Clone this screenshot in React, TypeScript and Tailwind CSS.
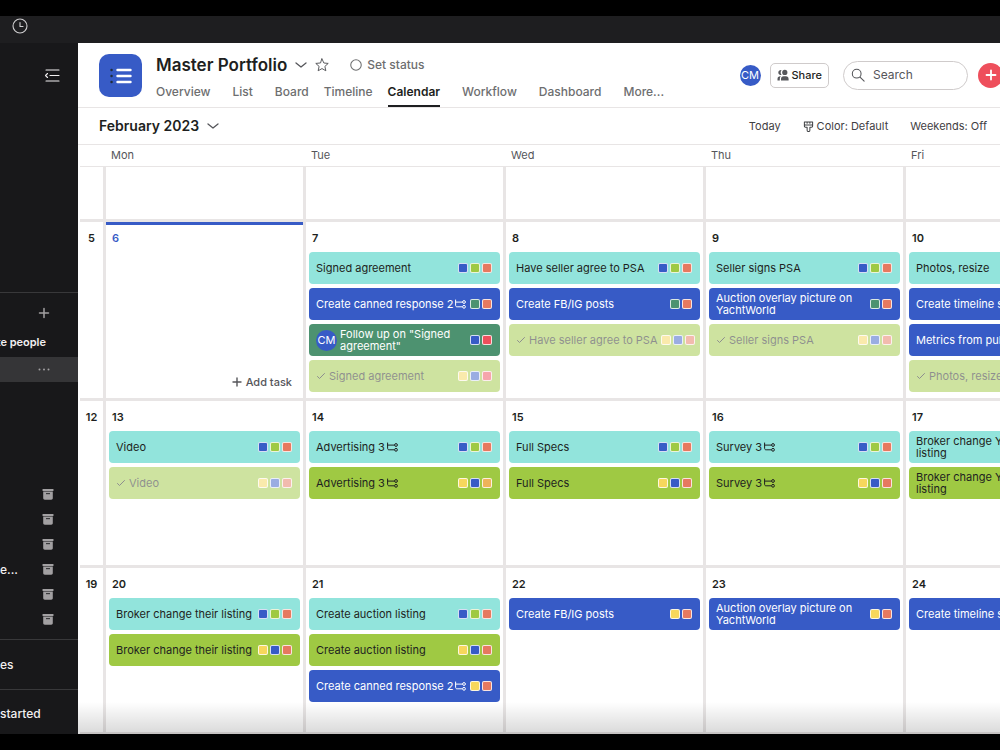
import type { ReactNode } from "react"
import clsx from "clsx"

type Tone = "teal" | "blue" | "forest" | "lime"
type Tag = "blue" | "lime" | "coral" | "red" | "yellow" | "orange" | "forest"

type Task = {
  title: string
  tone: Tone
  tags: Tag[]
  subtasks?: number
  done?: boolean
  assignee?: string
}

type Day = { date: string; today?: boolean; tasks: Task[] }
type Week = { number: string; days: Day[] }

const toneClass: Record<Tone, string> = {
  teal: "bg-[#92e4dc] text-[#1e1f21]",
  blue: "bg-[#375bc6] text-white",
  forest: "bg-[#4d9270] text-white",
  lime: "bg-[#9fc943] text-[#1e1f21]",
}

const tagClass: Record<Tag, string> = {
  blue: "bg-[#375bc6]",
  lime: "bg-[#9fc943]",
  coral: "bg-[#e6795f]",
  red: "bg-[#ee4f5c]",
  yellow: "bg-[#f7d75c]",
  orange: "bg-[#efb35a]",
  forest: "bg-[#4d9270]",
}

const open: Tag[] = ["blue", "lime", "coral"]
const closed: Tag[] = ["yellow", "blue", "coral"]

const weeks: Week[] = [
  {
    number: "5",
    days: [
      { date: "6", today: true, tasks: [] },
      {
        date: "7",
        tasks: [
          { title: "Signed agreement", tone: "teal", tags: open },
          { title: "Create canned response", tone: "blue", tags: ["forest", "coral"], subtasks: 2 },
          { title: 'Follow up on "Signed agreement"', tone: "forest", tags: ["blue", "red"], assignee: "CM" },
          { title: "Signed agreement", tone: "lime", tags: ["yellow", "blue", "red"], done: true },
        ],
      },
      {
        date: "8",
        tasks: [
          { title: "Have seller agree to PSA", tone: "teal", tags: open },
          { title: "Create FB/IG posts", tone: "blue", tags: ["forest", "coral"] },
          { title: "Have seller agree to PSA", tone: "lime", tags: closed, done: true },
        ],
      },
      {
        date: "9",
        tasks: [
          { title: "Seller signs PSA", tone: "teal", tags: open },
          { title: "Auction overlay picture on YachtWorld", tone: "blue", tags: ["forest", "coral"] },
          { title: "Seller signs PSA", tone: "lime", tags: closed, done: true },
        ],
      },
      {
        date: "10",
        tasks: [
          { title: "Photos, resize", tone: "teal", tags: open },
          { title: "Create timeline schedule", tone: "blue", tags: ["forest", "coral"] },
          { title: "Metrics from publisher", tone: "blue", tags: ["forest", "coral"] },
          { title: "Photos, resize", tone: "lime", tags: closed, done: true },
        ],
      },
    ],
  },
  {
    number: "12",
    days: [
      {
        date: "13",
        tasks: [
          { title: "Video", tone: "teal", tags: open },
          { title: "Video", tone: "lime", tags: closed, done: true },
        ],
      },
      {
        date: "14",
        tasks: [
          { title: "Advertising", tone: "teal", tags: open, subtasks: 3 },
          { title: "Advertising", tone: "lime", tags: ["yellow", "blue", "orange"], subtasks: 3 },
        ],
      },
      {
        date: "15",
        tasks: [
          { title: "Full Specs", tone: "teal", tags: open },
          { title: "Full Specs", tone: "lime", tags: closed },
        ],
      },
      {
        date: "16",
        tasks: [
          { title: "Survey", tone: "teal", tags: open, subtasks: 3 },
          { title: "Survey", tone: "lime", tags: closed, subtasks: 3 },
        ],
      },
      {
        date: "17",
        tasks: [
          { title: "Broker change Yacht listing", tone: "teal", tags: open },
          { title: "Broker change Yacht listing", tone: "lime", tags: closed },
        ],
      },
    ],
  },
  {
    number: "19",
    days: [
      {
        date: "20",
        tasks: [
          { title: "Broker change their listing", tone: "teal", tags: open },
          { title: "Broker change their listing", tone: "lime", tags: closed },
        ],
      },
      {
        date: "21",
        tasks: [
          { title: "Create auction listing", tone: "teal", tags: open },
          { title: "Create auction listing", tone: "lime", tags: closed },
          { title: "Create canned response", tone: "blue", tags: ["yellow", "coral"], subtasks: 2 },
        ],
      },
      { date: "22", tasks: [{ title: "Create FB/IG posts", tone: "blue", tags: ["yellow", "coral"] }] },
      {
        date: "23",
        tasks: [{ title: "Auction overlay picture on YachtWorld", tone: "blue", tags: ["yellow", "coral"] }],
      },
      { date: "24", tasks: [{ title: "Create timeline schedule", tone: "blue", tags: ["yellow", "coral"] }] },
    ],
  },
]

const weekdays = ["Mon", "Tue", "Wed", "Thu", "Fri"]
const tabGroups = [["Overview"], ["List"], ["Board", "Timeline", "Calendar"], ["Workflow"], ["Dashboard"], ["More..."]]

const gridCols = "grid grid-cols-[23px_repeat(5,minmax(200px,1fr))]"

function Icon({ size, box = 16, className, children }: { size: number; box?: number; className?: string; children: ReactNode }) {
  return (
    <svg
      width={size}
      height={size}
      viewBox={`0 0 ${box} ${box}`}
      fill="none"
      stroke="currentColor"
      strokeLinecap="round"
      strokeLinejoin="round"
      aria-hidden="true"
      className={clsx("shrink-0", className)}
    >
      {children}
    </svg>
  )
}

function ChevronDown() {
  return (
    <Icon size={12} box={12} className="text-[#55565a]">
      <path d="M1 4l5 4 5-4" strokeWidth="1.3" />
    </Icon>
  )
}

function SubtaskIcon() {
  return (
    <svg width="11" height="10" viewBox="0 0 11 10" fill="none" stroke="currentColor" aria-hidden="true" className="shrink-0">
      <path d="M.6 1v5.3c0 1 .5 1.5 1.5 1.5h5M.6 3.1h6.500" strokeLinecap="round" />
      <circle cx="9" cy="3" r="1.4" />
      <circle cx="9" cy="7.8" r="1.4" />
    </svg>
  )
}

function ArchiveIcon() {
  return (
    <svg width="12" height="11" viewBox="0 0 12 11" fill="#a2a0a2" aria-hidden="true">
      <rect x="0.5" y="0" width="11" height="2" rx="0.5" />
      <path d="M1.2 2.6h9.6v6.4c0 1-.6 1.7-1.6 1.7H2.8c-1 0-1.6-.7-1.6-1.7z" />
      <path d="M4 4h4v1.2H4z" fill="#3a3a3c" />
    </svg>
  )
}

function Avatar() {
  return (
    <span className="flex size-[21px] shrink-0 items-center justify-center rounded-full bg-[#375bc6] text-[11px] text-white">
      CM
    </span>
  )
}

function TaskCard({ task }: { task: Task }) {
  return (
    <button
      type="button"
      className={clsx(
        "flex h-8 w-full items-center gap-[3px] rounded-[4px] pr-2 pl-[7px] text-left text-[11px] leading-3",
        toneClass[task.tone],
        task.done && "opacity-50"
      )}
    >
      {task.assignee && <Avatar />}
      {task.done && (
        <Icon size={10} box={10}>
          <path d="M1.5 5.5l2 2 5-5" />
        </Icon>
      )}
      <span className={clsx(task.done || task.subtasks ? "whitespace-nowrap" : "min-w-0 flex-1")}>{task.title}</span>
      {task.subtasks && (
        <span className="flex items-center gap-0.5">
          {task.subtasks}
          <SubtaskIcon />
        </span>
      )}
      <span className="ml-auto flex shrink-0 gap-0.5">
        {task.tags.map((tag) => (
          <span key={tag} className={clsx("size-2.5 rounded-[2px] border border-white/80", tagClass[tag])} />
        ))}
      </span>
    </button>
  )
}

function DayCell({ day }: { day: Day }) {
  return (
    <div
      className={clsx(
        "flex min-w-0 flex-col border-l-[3px] border-[#e8e5e5] px-[3px] pb-1.5",
        day.today && "shadow-[inset_0_3px_0_#375bc6]"
      )}
    >
      <p className={clsx("h-[30px] pt-2 pl-[3px] text-[11px] leading-4 font-semibold", day.today ? "text-[#375bc6]" : "text-[#1e1f21]")}>
        {day.date}
      </p>
      <div className="flex flex-col gap-1">
        {day.tasks.map((task, i) => (
          <TaskCard key={i} task={task} />
        ))}
      </div>
      {day.today && (
        <button type="button" className="mt-auto mr-2 flex items-center gap-1 self-end text-[11px] leading-5 font-medium text-[#55565a]">
          <Icon size={10} box={10}>
            <path d="M5 1v8M1 5h8" strokeWidth="1.4" />
          </Icon>
          Add task
        </button>
      )}
    </div>
  )
}

function Sidebar() {
  return (
    <aside className="flex w-[78px] shrink-0 flex-col overflow-hidden bg-[#18181a] text-xs font-medium whitespace-nowrap text-[#f2f0f1]">
      <div className="flex h-[250px] items-start justify-end border-b border-[#38383a] pt-6 pr-[18px]">
        <button type="button" aria-label="Collapse sidebar">
          <Icon size={16}>
            <path d="M2 3h13M6 8.5h9M2 14h13M3.5 6.5l-2 2 2 2" strokeWidth="1.1" />
          </Icon>
        </button>
      </div>
      <div className="flex h-10 items-center justify-end pr-7">
        <button type="button" aria-label="Add" className="text-[#a2a0a2]">
          <Icon size={12} box={12}>
            <path d="M6 1.5v9M1.5 6h9" strokeWidth="1.5" />
          </Icon>
        </button>
      </div>
      <div className="mb-1.5 flex justify-end pr-8 text-[11px] leading-[18px] font-semibold">te people</div>
      <div className="flex h-[25px] items-center justify-end bg-[#353537] pr-7">
        <button type="button" aria-label="More actions">
          <svg width="12" height="3" viewBox="0 0 12 3" fill="#a2a0a2" aria-hidden="true">
            <circle cx="1.5" cy="1.5" r="1" />
            <circle cx="6" cy="1.5" r="1" />
            <circle cx="10.5" cy="1.5" r="1" />
          </svg>
        </button>
      </div>
      <ul className="mt-auto pb-[7px]">
        {["", "", "", "e...", "", ""].map((label, i) => (
          <li key={i} className="flex h-[25px] items-center justify-between pr-6">
            <span>{label}</span>
            <ArchiveIcon />
          </li>
        ))}
      </ul>
      <div className="flex h-[50px] shrink-0 items-center border-t border-[#38383a]">es</div>
      <div className="flex h-[45px] shrink-0 items-center border-t border-[#38383a] pt-1">started</div>
    </aside>
  )
}

function Header() {
  return (
    <header className="flex h-[65px] shrink-0 border-b border-[#e8e5e5] pl-[21px]">
      <div className="mt-[11px] flex size-[43px] shrink-0 items-center justify-center rounded-[10px] bg-[#375bc6]">
        <svg width="22" height="16" viewBox="0 0 22 16" fill="none" strokeLinecap="round" aria-hidden="true">
          <path d="M7.5 2h13M7.5 8h13M7.5 14h13" stroke="#fff" strokeWidth="2.4" />
          <path d="M1.5 2h.1M1.5 8h.1M1.5 14h.1" stroke="#1f2c3c" strokeWidth="2.4" />
        </svg>
      </div>
      <div className="ml-3.5 flex flex-col justify-between pt-2.5 whitespace-nowrap">
        <div className="flex items-center gap-2">
          <h1 className="text-[17px] leading-6 font-semibold text-[#1e1f21]">Master Portfolio</h1>
          <ChevronDown />
          <Icon size={14} className="text-[#55565a]">
            <path d="M8 1l2.1 4.7 5 .5-3.8 3.4 1.1 5L8 12.1l-4.400 2.500 1.100-5L.9 6.200l5-.5z" strokeWidth="1.1" />
          </Icon>
          <button type="button" className="ml-3 flex items-center gap-1 text-xs font-medium text-[#6d6e6f]">
            <Icon size={14}>
              <circle cx="8" cy="8" r="6" strokeWidth="1.2" />
            </Icon>
            Set status
          </button>
        </div>
        <nav className="flex gap-[22px] text-xs leading-5 font-medium text-[#6d6e6f]">
          {tabGroups.map((group) => (
            <div key={group[0]} className="flex gap-[15px]">
              {group.map((tab) => (
                <a
                  key={tab}
                  href="#"
                  className={clsx("border-b-2 pb-[3px]", tab === "Calendar" ? "border-[#1e1f21] font-semibold text-[#1e1f21]" : "border-transparent")}
                >
                  {tab}
                </a>
              ))}
            </div>
          ))}
        </nav>
      </div>
      <div className="-mr-[3px] ml-auto flex shrink-0 items-center">
        <Avatar />
        <button
          type="button"
          className="ml-[9px] flex h-[25px] items-center gap-[3px] rounded-[5px] border border-[#cfcbcb] px-1.5 text-[11px] font-medium text-[#1e1f21]"
        >
          <svg width="12" height="12" viewBox="0 0 12 12" fill="#55565a" aria-hidden="true">
            <circle cx="7.8" cy="3.4" r="2.6" />
            <path d="M4 11.5V10c0-1.7 1-2.7 2.6-2.7h2.3c1.7 0 2.7 1 2.7 2.7v1.5z" />
            <path d="M4.6 1A2.6 2.6 0 0 0 1.3 3.4 2.6 2.6 0 0 0 4.6 5.9 4 4 0 0 1 4.6 1zM3.3 7.3C1.5 7.3.5 8.3.5 10v1.5h2.3V10c0-1.1.3-2 1-2.7z" />
          </svg>
          Share
        </button>
        <label className="ml-3.5 flex h-[29px] w-[125px] items-center gap-2 rounded-full border border-[#cfcbcb] pl-[7px] text-[#55565a]">
          <Icon size={14}>
            <circle cx="6.5" cy="6.5" r="5" strokeWidth="1.2" />
            <path d="M10.3 10.3L15 15" strokeWidth="1.2" />
          </Icon>
          <input
            type="search"
            aria-label="Search"
            placeholder="Search"
            className="w-full min-w-0 bg-transparent text-xs outline-none placeholder:text-[#55565a]"
          />
        </label>
        <button type="button" aria-label="Create" className="ml-2.5 flex size-[25px] items-center justify-center rounded-full bg-[#ee4f5c] text-white">
          <Icon size={12} box={12}>
            <path d="M6 1.5v9M1.5 6h9" strokeWidth="1.8" />
          </Icon>
        </button>
      </div>
    </header>
  )
}

function Toolbar() {
  return (
    <div className="flex h-[37px] shrink-0 items-center border-b border-[#e8e5e5] pr-[13px] pl-[21px] text-[11px] text-[#3f4043]">
      <button type="button" className="flex items-center gap-2 text-sm font-semibold text-[#1e1f21]">
        February 2023
        <ChevronDown />
      </button>
      <div className="ml-auto flex items-center gap-[22px]">
        <button type="button">Today</button>
        <button type="button" className="flex items-center gap-[3px]">
          <Icon size={11} box={12}>
            <path d="M1.5 1h9v4.5c0 .8-.5 1.2-1.2 1.2H7.5V10a1.5 1.5 0 0 1-3 0V6.7H2.7c-.7 0-1.2-.4-1.2-1.2zM1.5 4.3h9M4.5 1v1.5M7.5 1v1.5" strokeWidth="1.1" />
          </Icon>
          Color: Default
        </button>
        <button type="button">Weekends: Off</button>
      </div>
    </div>
  )
}

export default function App() {
  return (
    <div className="flex h-screen flex-col overflow-hidden bg-black py-4 font-['Inter',sans-serif]">
      <div className="flex h-[27px] shrink-0 items-start bg-[#1e1e20] pt-0.5 pl-3 text-[#d0cfd0]">
        <Icon size={16}>
          <circle cx="8" cy="8" r="7" strokeWidth="1.1" />
          <path d="M8 4.5V8.5h3" strokeWidth="1.1" />
        </Icon>
      </div>
      <div className="flex min-h-0 flex-1">
        <Sidebar />
        <main className="relative flex min-w-0 flex-1 flex-col overflow-hidden bg-white">
          <Header />
          <Toolbar />
          <div className="ml-0.5">
            <div className={clsx(gridCols, "border-b border-[#e8e5e5]")}>
              <span />
              {weekdays.map((name) => (
                <span key={name} className="pl-2 text-[11px] leading-[21px] text-[#55565a]">
                  {name}
                </span>
              ))}
            </div>
            {/* tail of the previous week */}
            <div className={clsx(gridCols, "h-[55px] border-b-[3px] border-[#e8e5e5]")}>
              <span />
              {weekdays.map((name) => (
                <span key={name} className="border-l-[3px] border-[#e8e5e5]" />
              ))}
            </div>
            {weeks.map((week) => (
              <div key={week.number} className={clsx(gridCols, "min-h-[167px] border-b-[3px] border-[#e8e5e5]")}>
                <span className="pt-2 text-center text-[11px] leading-4 font-semibold text-[#1e1f21]">{week.number}</span>
                {week.days.map((day) => (
                  <DayCell key={day.date} day={day} />
                ))}
              </div>
            ))}
          </div>
          <div className="pointer-events-none absolute inset-x-0 bottom-0 h-8 bg-linear-to-b from-transparent to-black/15" />
        </main>
      </div>
    </div>
  )
}
